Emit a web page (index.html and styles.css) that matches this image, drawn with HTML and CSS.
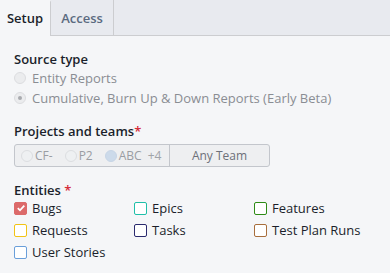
FILE: index.html
```html
<!DOCTYPE html>
<html lang="en">
<head>
  <meta charset="UTF-8">
  <title>Report Setup</title>
  <link rel="stylesheet" href="styles.css">
</head>
<body>
  <div class="tabs">
    <div class="tab tab-active">Setup</div>
    <div class="tab">Access</div>
  </div>

  <div class="panel">
    <section class="field">
      <h3 class="field-title">Source type</h3>
      <label class="radio-row">
        <span class="radio"></span>
        <span class="radio-text">Entity Reports</span>
      </label>
      <label class="radio-row">
        <span class="radio radio-checked"></span>
        <span class="radio-text">Cumulative, Burn Up &amp; Down Reports (Early Beta)</span>
      </label>
    </section>

    <section class="field">
      <h3 class="field-title">Projects and teams<span class="required">*</span></h3>
      <div class="team-picker">
        <div class="team-list">
          <span class="team"><span class="dot"></span>CF-</span>
          <span class="team"><span class="dot"></span>P2</span>
          <span class="team"><span class="dot dot-blue"></span>ABC</span>
          <span class="team-more">+4</span>
        </div>
        <div class="team-any">Any Team</div>
      </div>
    </section>

    <section class="field">
      <h3 class="field-title">Entities <span class="required">*</span></h3>
      <div class="entities">
        <label class="check-row">
          <span class="check check-bug">
            <svg width="10" height="10" viewBox="0 0 10 10"><path d="M1.8 5.2 L4 7.3 L8.3 2.7" fill="none" stroke="#fff" stroke-width="1.8"/></svg>
          </span>
          Bugs
        </label>
        <label class="check-row"><span class="check check-epic"></span>Epics</label>
        <label class="check-row"><span class="check check-feature"></span>Features</label>
        <label class="check-row"><span class="check check-request"></span>Requests</label>
        <label class="check-row"><span class="check check-task"></span>Tasks</label>
        <label class="check-row"><span class="check check-run"></span>Test Plan Runs</label>
        <label class="check-row"><span class="check check-story"></span>User Stories</label>
      </div>
    </section>
  </div>
</body>
</html>
```

FILE: styles.css
```css
* {
  margin: 0;
  padding: 0;
  box-sizing: border-box;
}

body {
  font-family: 'Open Sans', sans-serif;
  font-size: 13px;
  color: #1b1f2b;
  background-color: #f5f6f8;
}

/* Tabs */
.tabs {
  display: flex;
  height: 36px;
  background-color: #e8eaef;
  border-bottom: 1px solid #cccdd0;
}

.tab {
  padding-top: 9px;
  color: #5b6a80;
  font-weight: 600;
  border-right: 1px solid #cccdd0;
  width: 63px;
  text-align: center;
}

.tab-active {
  width: 51px;
  color: #1b1f2b;
  background-color: #f5f6f8;
  margin-bottom: -1px;
  border-top: 2px solid #f5f6f8;
  padding-top: 7px;
}

/* Fields */
.panel {
  padding: 14px 14px 0;
}

.field {
  margin-bottom: 14px;
}

.field-title {
  font-size: 13px;
  font-weight: 600;
  line-height: 18px;
}

.required {
  color: #d52d3a;
}

.radio-row {
  display: flex;
  align-items: center;
  height: 20px;
  color: #8a8d93;
}

.radio {
  width: 12px;
  height: 12px;
  border-radius: 50%;
  border: 1px solid #dcdde0;
  background-color: #ebecee;
  margin-right: 6px;
  position: relative;
}

.radio-checked::after {
  content: '';
  position: absolute;
  top: 3px;
  left: 3px;
  width: 4px;
  height: 4px;
  border-radius: 50%;
  background-color: #a8aaae;
}

/* Team picker */
.team-picker {
  display: flex;
  width: 256px;
  height: 23px;
  margin-top: 4px;
  border: 1px solid #c3c6cc;
  border-radius: 3px;
  background-color: #eeeff1;
  font-size: 12px;
}

.team-list {
  display: flex;
  align-items: center;
  padding-left: 6px;
  width: 155px;
  border-right: 1px solid #c3c6cc;
  color: #9a9da3;
}

.team {
  display: flex;
  align-items: center;
  margin-right: 12px;
}

.team:nth-child(3) {
  margin-right: 6px;
}

.dot {
  width: 12px;
  height: 12px;
  border-radius: 50%;
  border: 1px solid #dcdee1;
  background-color: #eef0f2;
  margin-right: 2px;
}

.dot-blue {
  background-color: #ccdaea;
  border-color: #c7d5e6;
}

.team-more {
  color: #a0a3a8;
}

.team-any {
  flex: 1;
  display: flex;
  align-items: center;
  justify-content: center;
  color: #6d7079;
}

/* Entities */
.entities {
  display: grid;
  grid-template-columns: 120px 120px 1fr;
  row-gap: 2px;
  margin-top: -1px;
}

.check-row {
  display: flex;
  align-items: center;
  height: 20px;
  color: #1b1f2b;
}

.check {
  display: flex;
  align-items: center;
  justify-content: center;
  width: 13px;
  height: 13px;
  border-radius: 2px;
  border: 1px solid;
  background-color: #fff;
  margin-right: 5px;
}

.check-bug { background-color: #dc6a6a; border-color: #dc6a6a; }
.check-epic { border-color: #1fbfa9; }
.check-feature { border-color: #2e8b16; }
.check-request { border-color: #f2c315; }
.check-task { border-color: #2a2a6e; }
.check-run { border-color: #a86e3c; }
.check-story { border-color: #6a9fda; }
```
